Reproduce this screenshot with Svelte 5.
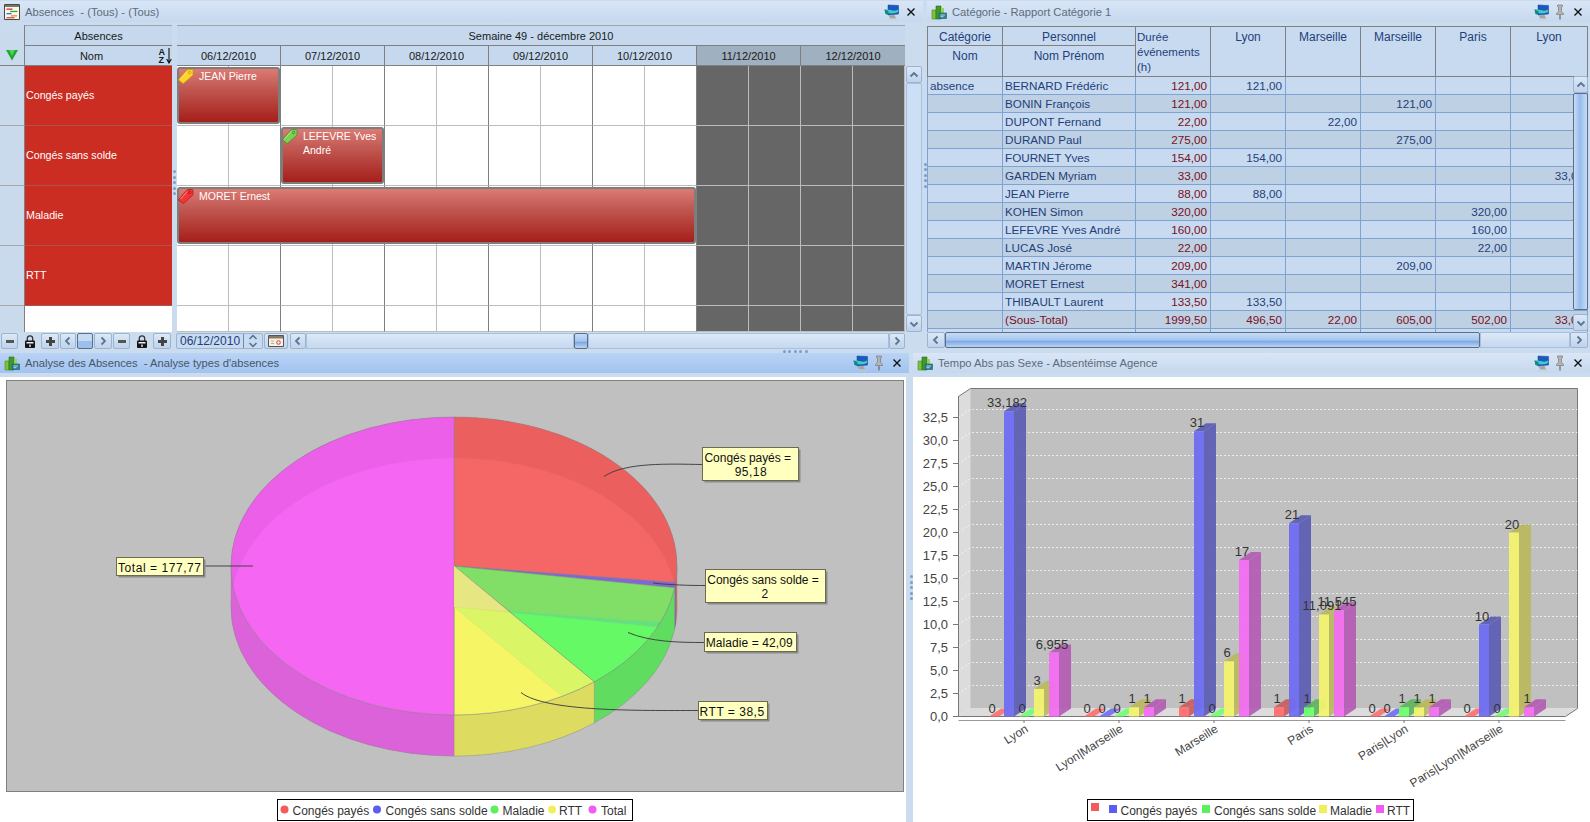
<script>
const rows = ['Congés payés', 'Congés sans solde', 'Maladie', 'RTT', ''];
const days = ['06/12/2010', '07/12/2010', '08/12/2010', '09/12/2010', '10/12/2010', '11/12/2010', '12/12/2010'];
const events = [
  { lines: ['JEAN Pierre'], day: 0, span: 1, row: 0, tag: '#ffd42a', edge: '#c29a00' },
  { lines: ['LEFEVRE Yves', 'André'], day: 1, span: 1, row: 1, tag: '#7dd052', edge: '#3f8a2a' },
  { lines: ['MORET Ernest'], day: 0, span: 5, row: 2, tag: '#f53535', edge: '#a81818' }
];

const tableRows = [
  ['absence', 'BERNARD Frédéric', '121,00', '121,00', '', '', '', ''],
  ['', 'BONIN François', '121,00', '', '', '121,00', '', ''],
  ['', 'DUPONT Fernand', '22,00', '', '22,00', '', '', ''],
  ['', 'DURAND Paul', '275,00', '', '', '275,00', '', ''],
  ['', 'FOURNET Yves', '154,00', '154,00', '', '', '', ''],
  ['', 'GARDEN Myriam', '33,00', '', '', '', '', '33,00'],
  ['', 'JEAN Pierre', '88,00', '88,00', '', '', '', ''],
  ['', 'KOHEN Simon', '320,00', '', '', '', '320,00', ''],
  ['', 'LEFEVRE Yves André', '160,00', '', '', '', '160,00', ''],
  ['', 'LUCAS José', '22,00', '', '', '', '22,00', ''],
  ['', 'MARTIN Jérome', '209,00', '', '', '209,00', '', ''],
  ['', 'MORET Ernest', '341,00', '', '', '', '', ''],
  ['', 'THIBAULT Laurent', '133,50', '133,50', '', '', '', ''],
  ['', '(Sous-Total)', '1999,50', '496,50', '22,00', '605,00', '502,00', '33,00']
];

// pie : angles clockwise from 12 o'clock, same geometry as the 3D chart
const cx = 454, cy = 566, rx = 223, ry = 149, depth = 41;
const slices = [
  { from: 0, to: 96.4, top: '#f56464', base: '#f47070', wall: '#e66060' },
  { from: 96.4, to: 98.4, top: '#6464f5', base: '#7070f4', wall: '#6060d0' },
  { from: 98.4, to: 141, top: '#64fa64', base: '#70f470', wall: '#60dc60' },
  { from: 141, to: 180, top: '#f5f564', base: '#f4f470', wall: '#dedc60' },
  { from: 180, to: 360, top: '#f564f2', base: '#f470f0', wall: '#db62d8' }
];

function pt(a, y0) {
  const r = (a * Math.PI) / 180;
  return (cx + rx * Math.sin(r)).toFixed(1) + ' ' + (y0 - ry * Math.cos(r)).toFixed(1);
}
function wedge(s, y0) {
  if (s.to - s.from === 180) {
    return `M${cx} ${y0}L${pt(s.from, y0)}A${rx} ${ry} 0 0 1 ${pt(270, y0)}A${rx} ${ry} 0 0 1 ${pt(s.to - 0.01, y0)}Z`;
  }
  const large = s.to - s.from > 180 ? 1 : 0;
  return `M${cx} ${y0}L${pt(s.from, y0)}A${rx} ${ry} 0 ${large} 1 ${pt(s.to, y0)}Z`;
}
function band(a, b) {
  if (b <= a) return '';
  const low = cy + depth;
  return `M${pt(a, cy)}A${rx} ${ry} 0 0 1 ${pt(b, cy)}L${pt(b, low)}A${rx} ${ry} 0 0 0 ${pt(a, low)}Z`;
}
const frontWall = (s) => band(Math.max(s.from, 90), Math.min(s.to, 270));
// walls behind the top face, seen through it
const backWalls = [
  { d: band(0, 90), fill: '#c34b4b' },
  { d: band(270, 360), fill: '#c34bc0' }
];

const callouts = [
  { x: 702.5, y: 447.5, w: 96, h: 33, lines: [{ t: 'Congés payés =', x: 704.5, w: 86.5 }, { t: '95,18', x: 734.7, w: 32 }], link: 'M702 464.5C670 464 625 462 604 476.5' },
  { x: 705.5, y: 569.5, w: 120, h: 33, lines: [{ t: 'Congés sans solde =', x: 707.3, w: 111.5 }, { t: '2', x: 761.6, w: 7 }], link: 'M705 585.5C690 585.5 670 585 653 583' },
  { x: 704.5, y: 632.5, w: 92, h: 19, lines: [{ t: 'Maladie = 42,09', x: 705.7, w: 87 }], link: 'M704 642.5C680 642.5 650 642 628 632.5' },
  { x: 698.5, y: 701.5, w: 69, h: 18, lines: [{ t: 'RTT = 38,5', x: 699.6, w: 64.5 }], link: 'M698 710.5C640 710.5 545 712 521 692.5' },
  { x: 116.5, y: 557.5, w: 87, h: 18, lines: [{ t: 'Total = 177,77', x: 118, w: 83 }], link: 'M203 566L253 566' }
];
const pieLegend = [
  { c: '#f25c5c', dot: 284.5, x: 292.5, t: 'Congés payés' },
  { c: '#5c5cf0', dot: 377, x: 385.5, t: 'Congés sans solde' },
  { c: '#5cf05c', dot: 494.5, x: 502.5, t: 'Maladie' },
  { c: '#f0f05c', dot: 552, x: 559, t: 'RTT' },
  { c: '#f05cf0', dot: 592.5, x: 601, t: 'Total' }
];

// bars
const y0 = 716.5, unit = 9.2, dx = 12, dy = 8;
const series = [
  { off: -35, front: '#ff6e6e', side: '#c85a5a' },
  { off: -20, front: '#6e6ef2', side: '#5a5ab4' },
  { off: -5, front: '#6eff6e', side: '#5ab45a' },
  { off: 10, front: '#f2f26e', side: '#b8b85c' },
  { off: 25, front: '#f26ef2', side: '#b45ab4' }
];
const cats = [
  { name: 'Lyon', x: 1024, v: [0, 33.182, 0, 3, 6.955], t: ['0', '33,182', '0', '3', '6,955'] },
  { name: 'Lyon|Marseille', x: 1119, v: [0, 0, 0, 1, 1], t: ['0', '0', '0', '1', '1'] },
  { name: 'Marseille', x: 1214, v: [1, 31, 0, 6, 17], t: ['1', '31', '0', '6', '17'] },
  { name: 'Paris', x: 1309, v: [1, 21, 1, 11.091, 11.545], t: ['1', '21', '1', '11,091', '11,545'] },
  { name: 'Paris|Lyon', x: 1404, v: [0, 0, 1, 1, 1], t: ['0', '0', '1', '1', '1'] },
  { name: 'Paris|Lyon|Marseille', x: 1499, v: [0, 10, 0, 20, 1], t: ['0', '10', '0', '20', '1'] }
];
const ticks = Array.from({ length: 14 }, (_, i) => i * 2.5);
const fmt = (v) => v.toFixed(1).replace('.', ',');

const bars = [];
for (const cat of cats) {
  cat.v.forEach((v, i) => {
    const s = series[i];
    const l = cat.x + s.off, r = l + 10, top = y0 - v * unit;
    bars.push({
      front: `M${l} ${top}H${r}V${y0}H${l}Z`,
      side: `M${r} ${top}l${dx} ${-dy}V${y0 - dy}l${-dx} ${dy}Z`,
      cap: `M${l} ${top}l${dx} ${-dy}h10l${-dx} ${dy}Z`,
      // a zero bar is only a flat patch on the floor, in the bright colour
      capFill: v === 0 ? s.front : s.side,
      s, l, top, label: cat.t[i]
    });
  });
}
const barLegend = [
  { c: '#f25c5c', x: 1091, y: 803, t: '', tx: 0 },
  { c: '#5c5cf0', x: 1109, y: 805, t: 'Congés payés', tx: 1120.5 },
  { c: '#5cf05c', x: 1202, y: 805, t: 'Congés sans solde', tx: 1214 },
  { c: '#f0f05c', x: 1319, y: 805, t: 'Maladie', tx: 1330 },
  { c: '#f05cf0', x: 1376, y: 805, t: 'RTT', tx: 1387 }
];
</script>

{#snippet chartIcon()}
  <svg class="ico" viewBox="0 0 16 16">
    <path d="M1 6h4v9H1z" fill="#7cc23c" stroke="#4c8a1e" stroke-width=".6" />
    <path d="M5 2h5v13H5z" fill="#3f9a2c" stroke="#2a6c1c" stroke-width=".6" />
    <path d="M10 4h3v6h-3z" fill="#9bd35a" />
    <path d="M8 9h7.500v5.500H8z" fill="#2e7f95" stroke="#1d5a6c" stroke-width=".6" />
    <path d="M9.500 11h4.500M9.500 12.700h3" stroke="#d8f0f4" stroke-width=".8" />
  </svg>
{/snippet}

{#snippet planIcon()}
  <svg class="ico" viewBox="0 0 16 16">
    <path d="M.5.500h15v15H.500z" fill="#f7f7ef" stroke="#4a4a3a" />
    <path d="M1 1h14v2H1z" fill="#77776a" />
    <path d="M2.500 4.500h6v1.300h-6z" fill="#d23030" />
    <path d="M6 6.800h7.500v1.300H6z" fill="#3aa63a" />
    <path d="M2.500 9h5v1.300h-5z" fill="#3a6ad2" />
    <path d="M7 11.200h6v1.300H7z" fill="#e09020" />
    <path d="M2.500 13.200h8v1.100h-8z" fill="#d23030" />
  </svg>
{/snippet}

{#snippet monitorIcon()}
  <svg class="ico mon" viewBox="0 0 16 16">
    <path d="M5 1L15.500 1.500V10L5 11z" fill="#1a58c4" stroke="#143f8e" stroke-width=".5" />
    <path d="M1.500 5.500C6 4.500 10 8.500 15 5.500V8C10 10.500 6 8.500 2.500 10z" fill="#3fcfc0" />
    <path d="M1.500 5.500l1 4.500 3 1V7z" fill="#12858c" />
    <path d="M5.500 11.500l6-.5 1.500 3.500H7.500z" fill="#a4a4a4" />
    <path d="M6 14.500h8v1H6z" fill="#c6c6c6" />
  </svg>
{/snippet}

{#snippet pinIcon()}
  <svg class="ico pin" viewBox="0 0 12 16">
    <path d="M3.500 1h5v1.500l-1 .5v4.500l2 2v1h-7v-1l2-2V3l-1-.5z" fill="#b4b4b4" stroke="#7a7a7a" stroke-width=".7" />
    <path d="M6 11v4.500" stroke="#6a6a6a" stroke-width="1.200" />
  </svg>
{/snippet}

{#snippet closeIcon()}
  <svg class="ico x" viewBox="0 0 10 10"><path d="M1.500 1.500l7 7M8.500 1.500l-7 7" stroke="#111" stroke-width="1.400" /></svg>
{/snippet}

{#snippet lock()}
  <svg class="lock" viewBox="0 0 12 15">
    <path d="M3.300 7V4.500a2.700 2.700 0 015.400 0V7" fill="none" stroke="#333" stroke-width="1.300" />
    <path d="M2 6.500h8a1 1 0 011 1v5.500a1 1 0 01-1 1H2a1 1 0 01-1-1V7.500a1 1 0 011-1z" fill="#151515" />
    <path d="M2.500 8h7v1.500h-7z" fill="#f0f0f0" />
    <path d="M5 10.500h2v2.500H5z" fill="#aaa" />
  </svg>
{/snippet}

{#snippet chev(dir)}
  <svg class="chev" viewBox="0 0 10 10">
    {#if dir === 'left'}<path d="M6.500 1.500L3 5l3.500 3.500" />{/if}
    {#if dir === 'right'}<path d="M3.500 1.500L7 5 3.500 8.500" />{/if}
    {#if dir === 'up'}<path d="M1.500 6.500L5 3l3.500 3.500" />{/if}
    {#if dir === 'down'}<path d="M1.500 3.500L5 7l3.500-3.500" />{/if}
  </svg>
{/snippet}

{#snippet grip(cls)}
  <div class="grip {cls}"><i></i><i></i><i></i><i></i><i></i></div>
{/snippet}

{#snippet tag(fill, edge)}
  <svg class="tag" viewBox="0 0 16 16">
    <path d="M1 11l8-9a2 2 0 011.500-.500H14a1 1 0 011 1v3.500a2 2 0 01-.500 1.500L6 15a1 1 0 01-1.500 0L1 12.500a1 1 0 010-1.500z" fill={fill} stroke={edge} stroke-width=".7" />
    <path d="M2.500 11L9.500 3.200" stroke="#fff" stroke-opacity=".45" />
    <circle cx="11.500" cy="4.500" r="1.300" fill="none" stroke={edge} stroke-width=".8" />
  </svg>
{/snippet}

<div class="app">
  <div class="top">
    <section class="panel planning">
      <header class="title">
        {@render planIcon()}
        <span class="cap">Absences&nbsp; - (Tous) - (Tous)</span>
        {@render monitorIcon()}
        {@render closeIcon()}
      </header>
      <div class="sched">
        <div class="gutter">
          <div class="g-head"><svg class="flt" viewBox="0 0 14 12"><path d="M1 1h12L7 11.500z" fill="#1fa62e" /><path d="M4 1h6L7 7z" fill="#4fd35a" /></svg></div>
          {#each rows as r, i}
            <div class="g-row" class:last={i === rows.length - 1}></div>
          {/each}
        </div>
        <div class="names">
          <div class="n-group">Absences</div>
          <div class="n-head">Nom
            <span class="sort"><span class="az">A<br />Z</span><svg viewBox="0 0 6 16"><path d="M3 0v14M.7 11L3 15l2.300-4" fill="none" stroke="#111" stroke-width="1.100" /></svg></span>
          </div>
          {#each rows as r, i}
            <div class="n-row" class:last={i === rows.length - 1}>{r}</div>
          {/each}
        </div>
        <div class="split inner">{@render grip('v')}</div>
        <div class="timeline">
          <div class="week">Semaine 49 - décembre 2010</div>
          <div class="days">
            {#each days as d, i}
              <div class="day" class:off={i > 4}>{d}</div>
            {/each}
          </div>
          <div class="body">
            {#each rows as r, i}
              <div class="t-row" class:last={i === rows.length - 1}>
                {#each Array(14) as _, c}
                  <div class="cell" class:end={c % 2 === 1} class:off={c >= 10}></div>
                {/each}
              </div>
            {/each}
            {#each events as e}
              <div class="event" style="left:{e.day * 104}px;top:{e.row * 60 + 1}px;width:{e.span * 104 - 1}px">
                {@render tag(e.tag, e.edge)}
                <div class="ev-text">{#each e.lines as l}<div>{l}</div>{/each}</div>
              </div>
            {/each}
          </div>
        </div>
        <div class="vbar">
          <div class="btn sq">{@render chev('up')}</div>
          <div class="v-track"></div>
          <div class="btn sq">{@render chev('down')}</div>
        </div>
      </div>
      <div class="tools">
        <div class="tools-left">
          <div class="btn tb"><b class="minus"></b></div>
          {@render lock()}
          <div class="btn tb big"><b class="plus"></b></div>
          <div class="btn tb nav">{@render chev('left')}</div>
          <div class="btn tb mid"></div>
          <div class="btn tb big">{@render chev('right')}</div>
          <div class="btn tb"><b class="minus"></b></div>
          {@render lock()}
          <div class="btn tb big"><b class="plus"></b></div>
        </div>
        <div class="date">
          <span>06/12/2010</span>
          <div class="spin"><svg viewBox="0 0 10 14"><path d="M1.500 5L5 1.500 8.500 5M1.500 9L5 12.500 8.500 9" fill="none" stroke="#51708f" stroke-width="1.500" /></svg></div>
        </div>
        <div class="btn cal">
          <svg viewBox="0 0 16 12"><path d="M.5.500h15v11H.500z" fill="#f8f0e4" stroke="#555" /><path d="M1 1h14v2.500H1z" fill="#8a7a65" /><circle cx="10.500" cy="7.500" r="1.800" fill="none" stroke="#d03a3a" stroke-width="1" /><path d="M3 5.500h3v1H3zM3 8h3v1H3z" fill="#c0a890" /></svg>
        </div>
        <div class="hbar">
          <div class="btn sq">{@render chev('left')}</div>
          <div class="h-track a"></div>
          <div class="h-thumb small"></div>
          <div class="h-track b"></div>
          <div class="btn sq">{@render chev('right')}</div>
        </div>
      </div>
    </section>

    <div class="split outer">{@render grip('v')}</div>

    <section class="panel report">
      <header class="title">
        {@render chartIcon()}
        <span class="cap">Catégorie - Rapport Catégorie 1</span>
        {@render monitorIcon()}
        {@render pinIcon()}
        {@render closeIcon()}
      </header>
      <div class="tbl-wrap">
        <table>
          <colgroup>
            <col class="c75" /><col class="c133" /><col class="c75" /><col class="c75" /><col class="c75" /><col class="c75" /><col class="c75" /><col class="c77" />
          </colgroup>
          <thead>
            <tr class="h1">
              <th>Catégorie</th><th>Personnel</th>
              <th rowspan="2" class="dur">Durée événements (h)</th>
              <th rowspan="2">Lyon</th><th rowspan="2">Marseille</th><th rowspan="2">Marseille</th><th rowspan="2">Paris</th><th rowspan="2">Lyon</th>
            </tr>
            <tr class="h2"><th>Nom</th><th>Nom Prénom</th></tr>
          </thead>
          <tbody>
            {#each tableRows as row, i}
              <tr class:alt={i % 2 === 1} class:sum={i === tableRows.length - 1}>
                {#each row as v, c}
                  <td class:num={c > 1} class:total={c === 2}>{v}</td>
                {/each}
              </tr>
            {/each}
            <tr class="sum-after">{#each Array(8) as _}<td></td>{/each}</tr>
          </tbody>
        </table>
        <div class="vbar over">
          <div class="btn sq">{@render chev('up')}</div>
          <div class="v-thumb"></div>
          <div class="btn sq">{@render chev('down')}</div>
        </div>
      </div>
      <div class="hbar wide">
        <div class="btn sq">{@render chev('left')}</div>
        <div class="h-thumb big"></div>
        <div class="h-track rest"></div>
        <div class="btn sq">{@render chev('right')}</div>
      </div>
    </section>
  </div>

  <div class="hsplit">{@render grip('h')}</div>

  <div class="bottom">
    <section class="panel pie">
      <header class="title active">
        {@render chartIcon()}
        <span class="cap">Analyse des Absences&nbsp; - Analyse types d'absences</span>
        {@render monitorIcon()}
        {@render pinIcon()}
        {@render closeIcon()}
      </header>
      <svg class="chart pie-chart" viewBox="0 377 906 445">
        <rect x="0" y="377" width="906" height="445" fill="#fff" />
        <rect x="6.500" y="380.500" width="897" height="411" fill="#c0c0c0" stroke="#808080" />
        {#each slices as s}
          <path d={wedge(s, cy + depth)} fill={s.base} stroke="#888" stroke-opacity=".35" />
        {/each}
        {#each backWalls as w}
          <path d={w.d} fill={w.fill} />
        {/each}
        {#each slices as s}
          {#if frontWall(s)}<path d={frontWall(s)} fill={s.wall} stroke="#888" stroke-opacity=".35" />{/if}
        {/each}
        {#each slices as s}
          <path d={wedge(s, cy)} fill={s.top} fill-opacity=".8" stroke="#888" stroke-opacity=".5" />
        {/each}
        <path d="M454 566L508 611L454 607z" fill="#e6e682" />
        {#each callouts as c}
          <path d={c.link} fill="none" stroke="#444" />
          <rect x={c.x + 2} y={c.y + 2} width={c.w} height={c.h} fill="#8a8a8a" />
          <rect x={c.x} y={c.y} width={c.w} height={c.h} fill="#ffffc0" stroke="#6b6b55" />
          {#each c.lines as l, i}
            <text class="note" x={l.x} y={c.y + 14 + i * 14.500} textLength={l.w}>{l.t}</text>
          {/each}
        {/each}
        <rect x="277.500" y="799.500" width="355" height="21" fill="#fff" stroke="#000" />
        {#each pieLegend as l}
          <circle cx={l.dot} cy="809.500" r="4" fill={l.c} />
          <text class="legend" x={l.x} y="814.500">{l.t}</text>
        {/each}
      </svg>
    </section>

    <div class="split lower">{@render grip('v')}</div>

    <section class="panel bars">
      <header class="title">
        {@render chartIcon()}
        <span class="cap">Tempo Abs pas Sexe - Absentéimse Agence</span>
        {@render monitorIcon()}
        {@render pinIcon()}
        {@render closeIcon()}
      </header>
      <svg class="chart" viewBox="913 377 677 445">
        <rect x="913" y="377" width="677" height="445" fill="#fff" />
        <path d="M970 388.500H1577.500V708.500H970z" fill="#c0c0c0" />
        <path d="M958.500 396.500L970.500 388.500V708.500L958.500 716.500z" fill="#dcdcdc" />
        <path d="M958.500 716.500L970.500 708.500H1577.500L1565.500 716.500z" fill="#dcdcdc" />
        <path d="M958.500 396.500L970.500 388.500H1577.500V708.500L1565.500 716.500H958.500z" fill="none" stroke="#777" />
        {#each ticks as t}
          {#if t > 0}
            <path d="M958.500 {y0 - t * unit}l12 -8H1577.500" fill="none" stroke="#fff" stroke-dasharray="2 2" stroke-opacity=".7" />
          {/if}
          <path d="M953 {y0 - t * unit}h5" stroke="#777" />
          <text class="axis" x="948" y={y0 - t * unit + 4} text-anchor="end">{fmt(t)}</text>
        {/each}
        <path d="M958.500 396V717" stroke="#777" />
        {#each bars as b}
          <path d={b.side} fill={b.s.side} fill-opacity=".9" />
          <path d={b.cap} fill={b.capFill} fill-opacity=".9" />
          <path d={b.front} fill={b.s.front} fill-opacity=".95" />
        {/each}
        {#each bars as b}
          <text class="val" x={b.l + 3} y={b.top - 4} text-anchor="middle">{b.label}</text>
        {/each}
        <path d="M958.500 720.500H1565.500" stroke="#999" />
        {#each cats as c}
          <path d="M{c.x} 720v3" stroke="#777" />
          <text class="axis cat" text-anchor="end" transform="translate({c.x + 5} 731) rotate(-32)">{c.name}</text>
        {/each}
        <rect x="1087.500" y="799.500" width="326" height="21" fill="#fff" stroke="#000" />
        {#each barLegend as l}
          <rect x={l.x} y={l.y} width="8" height="8" fill={l.c} />
          {#if l.t}<text class="legend" x={l.tx} y="814.500">{l.t}</text>{/if}
        {/each}
      </svg>
    </section>
  </div>
</div>

<style>
:global(body) {
  margin: 0;
  background: #cbdcef;
}
.app {
  width: 1590px;
  height: 822px;
  overflow: hidden;
  display: flex;
  flex-direction: column;
  font-family: "Liberation Sans", Arial, sans-serif;
  font-size: 11px;
  color: #222;
  background: #cbdcef;
}
.top {
  display: flex;
  height: 350px;
}
.bottom {
  display: flex;
  height: 469px;
}
.panel {
  display: flex;
  flex-direction: column;
  min-width: 0;
}
.planning { width: 923px; }
.report { width: 663px; }
.pie { width: 909px; }
.bars { width: 677px; }

.title {
  display: flex;
  align-items: center;
  gap: 5px;
  height: 21px;
  margin-top: 1px;
  padding: 0 3px 0 4px;
  background: linear-gradient(#d9e6f7, #c6d8ee);
  color: #5d6b7b;
  font-size: 11.200px;
  flex: none;
}
.title.active {
  background: linear-gradient(#b9d3f5, #a2c3ef);
  color: #47566a;
}
.planning .title { margin-bottom: 3px; }
.report .title { margin-bottom: 4px; }
.pie .title, .bars .title {
  margin: 0 0 4px;
  height: 20px;
}
.cap {
  flex: 1;
  white-space: pre;
}
.ico { width: 16px; height: 16px; flex: none; }
.ico.x { width: 10px; height: 10px; margin: 0 4px 0 2px; }
.ico.pin { width: 12px; }

/* planning */
.sched {
  display: flex;
  height: 307px;
  flex: none;
}
.gutter {
  width: 25px;
  flex: none;
  display: flex;
  flex-direction: column;
  background: #c9daed;
  border-right: 1px solid #808080;
  box-sizing: border-box;
}
.g-head {
  height: 41px;
  box-sizing: border-box;
  border-bottom: 1px solid #808080;
  display: flex;
  align-items: flex-end;
  justify-content: center;
  padding-bottom: 4px;
  flex: none;
}
.flt { width: 14px; height: 12px; }
.g-row {
  height: 60px;
  box-sizing: border-box;
  border-bottom: 1px solid #a9a9a9;
  flex: none;
}
.g-row.last { height: 26px; border: 0; }
.names {
  width: 147px;
  flex: none;
  background: #fff;
}
.n-group, .n-head, .week, .day {
  height: 20px;
  box-sizing: border-box;
  display: flex;
  align-items: center;
  justify-content: center;
  background: #c5d8ed;
  border-bottom: 1px solid #808080;
  color: #1a1a1a;
}
.n-group, .week {
  height: 21px;
  border-top: 1px solid #9aa6b4;
}
.n-head {
  position: relative;
  padding-right: 14px;
}
.sort {
  position: absolute;
  right: 0;
  top: 2px;
  display: flex;
  gap: 1px;
}
.az {
  font-size: 9px;
  line-height: 8px;
  font-weight: bold;
}
.sort svg { width: 6px; height: 16px; }
.n-row {
  height: 60px;
  box-sizing: border-box;
  display: flex;
  align-items: center;
  padding: 0 0 2px 1px;
  background: #cb2d23;
  border-bottom: 1px solid #a8564f;
  color: #fff;
  font-size: 10.700px;
}
.n-row.last { height: 26px; background: #fff; border: 0; }
.split {
  width: 4px;
  flex: none;
  background: #cbdcef;
  display: flex;
  align-items: center;
  justify-content: center;
}
.split.inner {
  width: 5px;
  padding-top: 8px;
  box-sizing: border-box;
}
.grip { display: flex; gap: 2.500px; }
.grip.v { flex-direction: column; }
.grip i {
  width: 3px;
  height: 3px;
  background: #7c9cc9;
  border-radius: 50%;
  display: block;
}
.timeline {
  width: 728px;
  flex: none;
  display: flex;
  flex-direction: column;
  background: #fff;
}
.days { display: flex; }
.day {
  width: 104px;
  border-right: 1px solid #808080;
}
.day:last-child { border-right: 0; }
.day.off { background: #9fb0c0; }
.body {
  position: relative;
  flex: 1;
  overflow: hidden;
}
.t-row {
  display: flex;
  height: 60px;
}
.t-row.last { height: 26px; }
.cell {
  width: 52px;
  box-sizing: border-box;
  border-right: 1px solid #bcbcbc;
  border-bottom: 1px solid #bcbcbc;
  background: #fff;
}
.cell.end { border-right-color: #7f7f7f; }
.cell.off { background: #666; }
.cell.off.end { border-right-color: #bcbcbc; }
.event {
  position: absolute;
  height: 57px;
  box-sizing: border-box;
  border: 2px solid #7d7d7d;
  border-radius: 3px;
  background: linear-gradient(#dc7a74, #c25a54 35%, #a61f1a);
  color: #fff;
  font-size: 10.500px;
  padding: 0 0 0 20px;
  line-height: 14px;
}
.tag {
  position: absolute;
  left: -1px;
  top: -1px;
  width: 16px;
  height: 16px;
}
.vbar {
  width: 16px;
  margin-left: 1px;
  flex: none;
  display: flex;
  flex-direction: column;
  height: 266px;
  align-self: flex-end;
}
.v-track {
  flex: 1;
  background: #cddff4;
  border: 1px solid #a8c0dd;
  border-radius: 2px;
  box-sizing: border-box;
}
.btn {
  box-sizing: border-box;
  border: 1px solid #9ab4d2;
  border-radius: 2px;
  background: linear-gradient(#dbe8f7, #c0d3ea);
  display: flex;
  align-items: center;
  justify-content: center;
  flex: none;
}
.btn.sq {
  width: 16px;
  height: 17px;
}
.chev {
  width: 10px;
  height: 10px;
}
.chev path {
  fill: none;
  stroke: #5a7694;
  stroke-width: 1.800;
}

/* planning toolbar */
.tools {
  display: flex;
  align-items: center;
  height: 18px;
  flex: none;
}
.tools-left {
  width: 172px;
  padding-left: 1px;
  box-sizing: border-box;
  display: flex;
  align-items: center;
  flex: none;
}
.btn.tb {
  width: 17px;
  height: 16px;
  margin-right: 1px;
}
.btn.big { width: 18px; }
.btn.nav { width: 16px; }
.btn.mid {
  width: 16px;
  background: linear-gradient(#c7daf0 50%, #9cbfec 50%);
  border-color: #56708e;
}
.minus {
  width: 8px;
  height: 3px;
  background: #555;
  display: block;
}
.plus {
  width: 9px;
  height: 9px;
  background:
    linear-gradient(#444, #444) center / 9px 3px no-repeat,
    linear-gradient(#444, #444) center / 3px 9px no-repeat;
  display: block;
}
.lock {
  width: 12px;
  height: 15px;
  margin: 0 5px 0 5px;
  flex: none;
}
.date {
  width: 87px;
  height: 16px;
  margin-left: 4px;
  box-sizing: border-box;
  border: 1px solid #9ab4d2;
  border-radius: 2px;
  background: #c9dbf1;
  color: #1f3f7a;
  font-size: 12px;
  display: flex;
  align-items: center;
  justify-content: space-between;
  padding-left: 3px;
  flex: none;
}
.spin {
  width: 19px;
  height: 14px;
  border-left: 1px solid #6f8cab;
  box-sizing: border-box;
  display: flex;
  justify-content: center;
}
.spin svg { width: 10px; height: 14px; }
.btn.cal {
  width: 24px;
  height: 16px;
  margin-left: 1px;
}
.cal svg { width: 16px; height: 12px; }
.hbar {
  display: flex;
  align-items: center;
  margin-left: 2px;
  width: 615px;
  flex: none;
}
.hbar .btn.sq { height: 16px; }
.h-track {
  height: 16px;
  box-sizing: border-box;
  background: linear-gradient(#dce9f8, #c5d8ee);
  border: 1px solid #a8c0dd;
}
.h-track.a { width: 268px; }
.h-track.b { flex: 1; }
.h-track.rest { flex: 1; }
.h-thumb {
  height: 16px;
  box-sizing: border-box;
  border: 1px solid #5a6e88;
  border-radius: 2px;
  background: linear-gradient(#c8dcf5, #a4c6f0 50%, #7fa9e6 60%, #bcd4f2);
}
.h-thumb.small { width: 14px; }
.h-thumb.big { width: 535px; }

/* report table */
.tbl-wrap {
  position: relative;
  height: 306px;
  width: 661px;
  overflow: hidden;
  flex: none;
  background: #c8daf0;
}
table {
  border-collapse: collapse;
  table-layout: fixed;
  width: 660px;
  color: #1f3f7a;
  border-top: 1px solid #808080;
}
.c75 { width: 75px; }
.c133 { width: 133px; }
.c77 { width: 77px; }
th {
  font-weight: normal;
  font-size: 12px;
  vertical-align: top;
  padding: 3px 1px 0;
  background: #c8daf0;
  border: 1px solid #808080;
  border-top: 0;
  line-height: 15px;
}
th.dur {
  text-align: left;
  font-size: 11.500px;
  line-height: 15px;
}
.h1 { height: 18px; }
.h2 { height: 31px; }
tbody tr { height: 18px; }
td {
  padding: 0 3px 0 2px;
  border: 1px solid #7ea3d2;
  white-space: nowrap;
  overflow: hidden;
  line-height: 14px;
  font-size: 11.700px;
}
tr.alt td { background: #bed0e4; }
td.num { text-align: right; }
td.total { color: #7a1020; }
tr.sum td { color: #7a1020; }
.sum-after { height: 6px !important; }
.vbar.over {
  position: absolute;
  right: 0;
  top: 50px;
  height: 255px;
  margin: 0;
  width: 15px;
}
.vbar.over .btn.sq { width: 15px; }
.v-thumb {
  flex: 1;
  box-sizing: border-box;
  border: 1px solid #5a6e88;
  border-radius: 2px;
  margin-bottom: 4px;
  background: linear-gradient(90deg, #c8dcf5, #96bcee 45%, #c8dcf5);
}
.hbar.wide {
  width: 661px;
  margin: 0;
  height: 16px;
}
.hbar.wide .btn.sq { width: 18px; }

/* chart panels */
.chart {
  display: block;
  width: 100%;
  height: 445px;
  flex: none;
}
.chart.pie-chart { width: 906px; }
.hsplit {
  height: 3px;
  flex: none;
  display: flex;
  justify-content: center;
  align-items: center;
}
.note {
  font-size: 12px;
  fill: #111;
}
.legend {
  font-size: 12px;
  fill: #333;
}
.axis {
  font-size: 13px;
  fill: #444;
}
.axis.cat { font-size: 12px; }
.val {
  font-size: 13px;
  fill: #333;
}
</style>
